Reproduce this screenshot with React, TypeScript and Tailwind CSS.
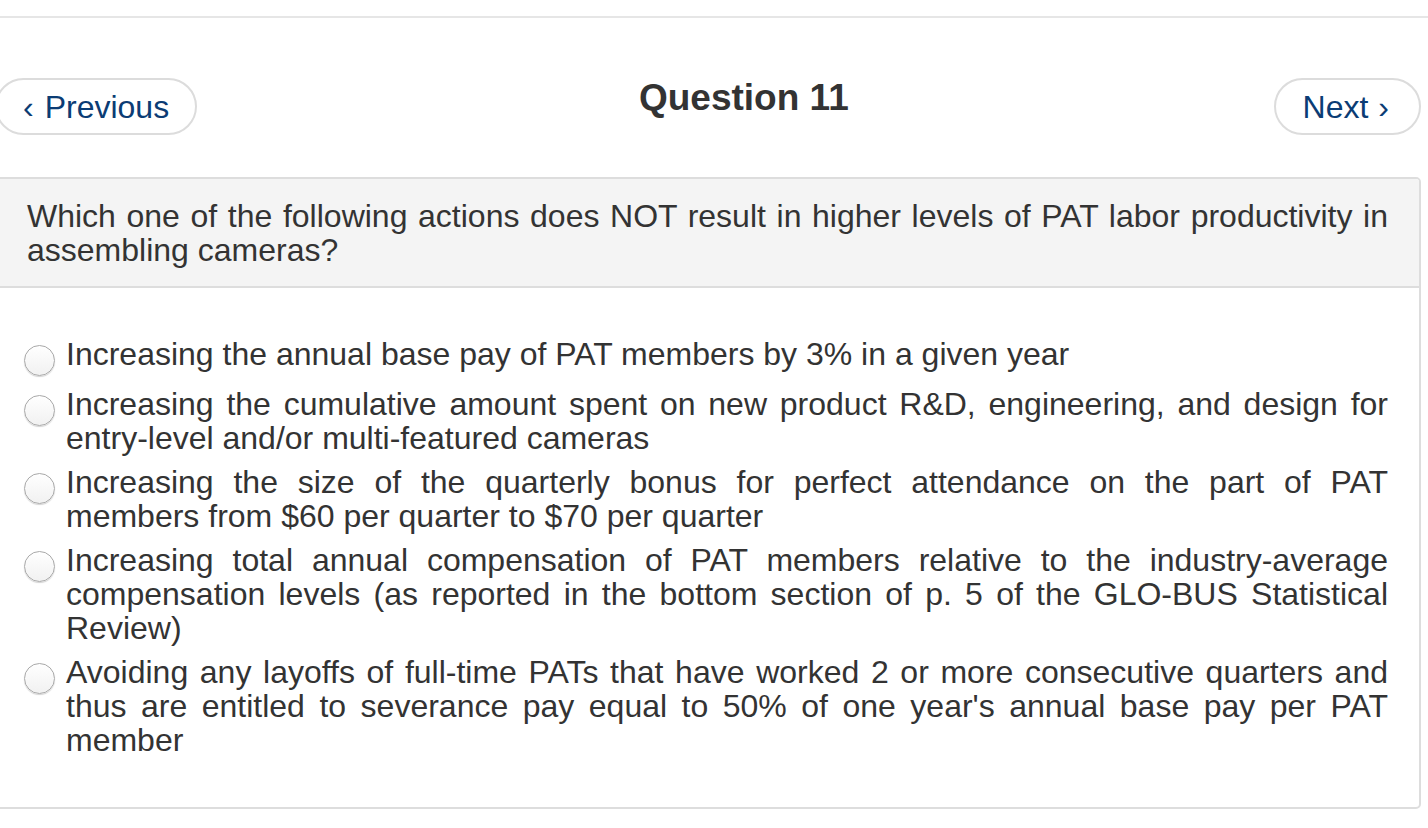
import React from "react";

const options = [
  "Increasing the annual base pay of PAT members by 3% in a given year",
  "Increasing the cumulative amount spent on new product R&D, engineering, and design for entry-level and/or multi-featured cameras",
  "Increasing the size of the quarterly bonus for perfect attendance on the part of PAT members\u00a0from $60 per quarter to $70 per quarter",
  "Increasing total annual compensation of PAT members relative to the industry-average compensation levels (as reported in the bottom section of p. 5 of the GLO-BUS Statistical Review)",
  "Avoiding any layoffs of full-time PATs that have worked 2 or more consecutive quarters and thus are entitled to severance pay equal to 50% of one year's annual base pay per PAT member",
];

export default function App() {
  return (
    <div className="min-h-screen bg-white text-[#333333] font-['Liberation_Sans','Helvetica','Arial',sans-serif] overflow-hidden">
      <div className="pt-4">
        <div className="h-[2px] bg-[#e6e6e6]" />
      </div>
      <div className="ml-[-5px] w-[1426px]">
        <div className="mt-[60px] flex items-start">
          <button className="h-[57px] pl-[26px] pr-[26px] flex items-center rounded-full border-2 border-[#dcdcdc] bg-white text-[#0b3c74] text-[32px] leading-[34px]">
            <span className="mr-[11px]">‹</span>
            <span>Previous</span>
          </button>
          <h1 className="flex-1 pl-[17px] mt-[1px] text-center text-[37px] leading-none font-bold text-[#333333]">
            Question 11
          </h1>
          <button className="h-[57px] pl-[27px] pr-[30px] flex items-center rounded-full border-2 border-[#dcdcdc] bg-white text-[#0b3c74] text-[32px] leading-[34px]">
            <span>Next</span>
            <span className="ml-[10px]">›</span>
          </button>
        </div>
        <div className="mt-[42px] rounded-[5px] border-2 border-[#dddddd] overflow-hidden bg-white">
          <div className="bg-[#f4f4f4] border-b-2 border-[#dddddd] pl-[30px] pr-[31px] pt-5 pb-[19px] text-[32px] leading-[34px] text-justify">
            Which one of the following actions does NOT result in higher levels of PAT labor productivity in assembling cameras?
          </div>
          <div className="pl-[27px] pr-[31px] pt-[49px] pb-[50px] flex flex-col gap-[10px]">
            {options.map((o, i) => (
              <label key={i} className="flex items-start min-h-[40px]">
                <span className="mt-2 mr-[11px] w-[31px] h-[31px] shrink-0 rounded-full border border-[#a9a9a9] bg-gradient-to-b from-white to-[#f1f1f1] shadow-[0_1px_1px_rgba(0,0,0,0.18)]" />
                <span className="flex-1 text-[32px] leading-[34px] text-justify">{o}</span>
              </label>
            ))}
          </div>
        </div>
      </div>
    </div>
  );
}
